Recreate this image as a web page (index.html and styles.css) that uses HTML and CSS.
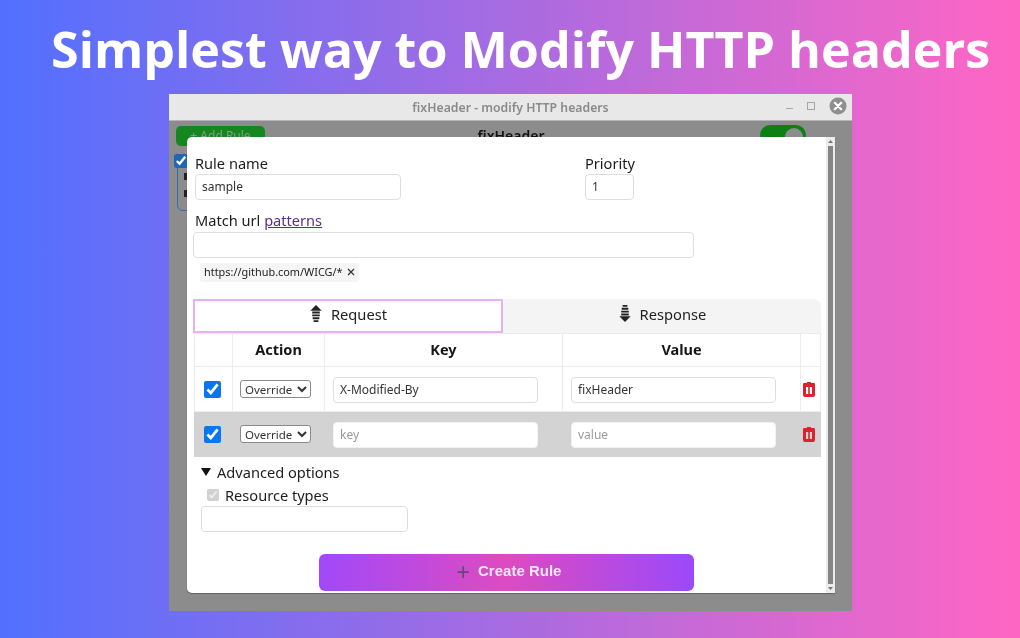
FILE: index.html
```html
<!DOCTYPE html>
<html lang="en">
<head>
<meta charset="utf-8">
<title>fixHeader</title>
<link rel="stylesheet" href="styles.css">
</head>
<body>
<h1 class="headline">Simplest way to Modify HTTP headers</h1>
<div class="window">
  <div class="titlebar">
    <span class="wintitle">fixHeader - modify HTTP headers</span>
    <div class="winctl">
      <span class="min"></span>
      <span class="max"></span>
      <svg class="close" viewBox="0 0 18 18" width="18" height="18"><circle cx="9" cy="9" r="8.5" fill="#8f8f8f"/><path d="M5.8 5.8l6.4 6.4M12.200 5.8l-6.4 6.4" stroke="#fff" stroke-width="2.2" stroke-linecap="round"/></svg>
    </div>
  </div>
  <div class="appbar">
    <span class="addrule">+ Add Rule</span>
    <span class="apptitle">fixHeader</span>
    <span class="toggle"><span class="knob"></span></span>
  </div>
  <div class="rulecard"><span class="cardmark"></span><span class="cardmark second"></span></div>
  <input class="rulecheck" type="checkbox" checked>

  <div class="modal">
    <div class="scrollbar">
      <svg class="sb-arrow" viewBox="0 0 9 9" width="9" height="9"><path d="M4.500 3L7 6H2z" fill="#777"/></svg>
      <span class="sb-thumb"></span>
      <svg class="sb-arrow" viewBox="0 0 9 9" width="9" height="9"><path d="M4.500 6L7 3H2z" fill="#777"/></svg>
    </div>
    <div class="toprow">
      <div class="namefield">
        <label class="lbl">Rule name</label>
        <input class="inp name" type="text" value="sample">
      </div>
      <div class="prifield">
        <label class="lbl">Priority</label>
        <input class="inp pri" type="text" value="1">
      </div>
    </div>
    <div class="urlfield">
      <label class="lbl">Match url <a class="link" href="#">patterns</a></label>
      <input class="inp url" type="text">
      <span class="chip">https://github.com/WICG/* <svg class="chipx" viewBox="0 0 8 8" width="8" height="8"><path d="M1 1l6 6M7 1l-6 6" stroke="#333" stroke-width="1.2"/></svg></span>
    </div>
    <div class="tabs">
      <div class="tab active">
        <svg viewBox="0 0 14 20" width="14" height="19"><path d="M7 1L13 7H1z" fill="#222"/><path d="M3 9h8M3 12h8M3.500 15h7M4.500 18h5" stroke="#222" stroke-width="2"/></svg>
        Request
      </div>
      <div class="tab">
        <svg viewBox="0 0 14 20" width="14" height="19"><path d="M4.500 2h5M3.500 5h7M3 8h8M3 11h8" stroke="#222" stroke-width="2"/><path d="M7 19L13 13H1z" fill="#222"/></svg>
        Response
      </div>
    </div>
    <table class="rules">
      <thead>
        <tr><th class="c1"></th><th class="c2">Action</th><th class="c3">Key</th><th class="c4">Value</th><th class="c5"></th></tr>
      </thead>
      <tbody>
        <tr>
          <td class="cc"><input class="chk" type="checkbox" checked></td>
          <td class="cs"><select class="sel"><option>Override</option></select></td>
          <td><input class="inp cell" type="text" value="X-Modified-By"></td>
          <td><input class="inp cell" type="text" value="fixHeader"></td>
          <td class="cc"><svg class="trash" viewBox="0 0 12 15" width="12" height="15"><path fill-rule="evenodd" d="M4 0h4v1h3a1 1 0 0 1 1 1v11a2 2 0 0 1-2 2H2a2 2 0 0 1-2-2V2a1 1 0 0 1 1-1h3zM3 5v7h2.200V5zm3.800 0v7H9V5z" fill="#e0202c"/></svg></td>
        </tr>
        <tr class="alt">
          <td class="cc"><input class="chk" type="checkbox" checked></td>
          <td class="cs"><select class="sel"><option>Override</option></select></td>
          <td><input class="inp cell" type="text" placeholder="key"></td>
          <td><input class="inp cell" type="text" placeholder="value"></td>
          <td class="cc"><svg class="trash" viewBox="0 0 12 15" width="12" height="15"><path fill-rule="evenodd" d="M4 0h4v1h3a1 1 0 0 1 1 1v11a2 2 0 0 1-2 2H2a2 2 0 0 1-2-2V2a1 1 0 0 1 1-1h3zM3 5v7h2.200V5zm3.800 0v7H9V5z" fill="#e0202c"/></svg></td>
        </tr>
      </tbody>
    </table>
    <div class="advanced"><span class="tri"></span>Advanced options</div>
    <label class="restype"><input class="graychk" type="checkbox" checked disabled>Resource types</label>
    <input class="inp res" type="text">
    <div class="btnrow">
      <button class="create" type="button"><span class="plus">+</span>Create Rule</button>
    </div>
  </div>
</div>
</body>
</html>
```

FILE: styles.css
```css
* { box-sizing: border-box; }
html, body { margin: 0; height: 100%; }
body {
  width: 1020px;
  height: 638px;
  overflow: hidden;
  position: relative;
  background: linear-gradient(90deg, #5170ff 0%, #ff66c4 100%);
  font-family: "Noto Sans", "Open Sans", sans-serif;
  color: #1a1a1a;
}
.headline {
  margin: 0;
  padding: 17px 0 0 51px;
  height: 94px;
  font-family: "Open Sans", "Noto Sans", sans-serif;
  font-size: 50.200px;
  line-height: 64px;
  font-weight: 700;
  color: #fff;
  white-space: nowrap;
}
.window {
  position: relative;
  margin-left: 169px;
  width: 683px;
  height: 517px;
  background: #8c8c8c;
  overflow: hidden;
  filter: blur(0.3px);
}
.titlebar {
  height: 27px;
  background: #e8e8e8;
  border-bottom: 1px solid #b5b5b5;
  display: flex;
  align-items: center;
  justify-content: center;
  position: relative;
}
.wintitle { font-size: 12.250px; font-weight: 600; color: #8a8a8a; }
.winctl {
  position: absolute;
  right: 5px;
  top: 3px;
  display: flex;
  align-items: center;
  gap: 14px;
  height: 18px;
}
.min { width: 7px; height: 1px; background: #a5a5a5; margin-top: 4px; }
.max { width: 8px; height: 8px; border: 1px solid #a5a5a5; }
.appbar {
  display: flex;
  align-items: flex-start;
  justify-content: space-between;
  padding: 5px 46px 0 7px;
  height: 26px;
}
.addrule {
  width: 89px;
  height: 20px;
  background: #14881e;
  border-radius: 5px;
  color: #8a9a8a;
  font-size: 12px;
  text-align: center;
  line-height: 20px;
}
.apptitle { font-size: 14px; font-weight: 600; color: #111; line-height: 20px; margin-left: -3px; }
.toggle {
  width: 46px;
  height: 20px;
  margin-top: -1px;
  background: #0d8014;
  border-radius: 10px;
  position: relative;
}
.knob { position: absolute; right: 3px; top: 3px; width: 18px; height: 18px; border-radius: 50%; background: #8c8c8c; }
.rulecard {
  position: absolute;
  left: 8px;
  top: 65px;
  width: 30px;
  height: 52px;
  border: 1px solid #2f6fb0;
  border-radius: 6px;
}
.cardmark { position: absolute; left: 6px; top: 13px; width: 4px; height: 7px; background: #222; }
.cardmark.second { top: 30px; }
.rulecheck { position: absolute; left: 5px; top: 60px; width: 14px; height: 14px; margin: 0; accent-color: #1f66b5; }
.modal {
  position: absolute;
  left: 18px;
  top: 43px;
  width: 648px;
  height: 456px;
  background: #fff;
  border-radius: 5px 0 0 5px;
  padding: 16px 0 0 6px;
  box-shadow: 0 1px 1px rgba(60,60,60,.5);
  overflow: hidden;
}
.scrollbar {
  position: absolute;
  right: 0;
  top: 0;
  bottom: 0;
  width: 9px;
  background: #ececec;
  display: flex;
  flex-direction: column;
  align-items: center;
}
.sb-arrow { flex: none; }
.sb-thumb { flex: 1; width: 5px; background: #858585; }
.toprow { display: flex; padding-left: 2px; }
.namefield { width: 390px; }
.lbl { display: block; font-size: 14.600px; line-height: 20px; color: #1d1d1d; margin-bottom: 1px; }
.link { color: #5b2d91; }
.inp {
  display: block;
  height: 26px;
  background: #fff;
  border: 1px solid #dedede;
  border-radius: 4px;
  padding: 0 6px 2px;
  font-family: inherit;
  font-size: 12px;
  color: #333;
  outline: none;
}
.inp::placeholder { color: #9a9a9a; }
.name { width: 206px; }
.pri { width: 49px; }
.urlfield { margin-top: 11px; position: relative; }
.urlfield .lbl { margin-left: 2px; margin-bottom: 3px; line-height: 18px; }
.url { width: 501px; }
.chip {
  display: inline-block;
  margin: 5px 0 0 7px;
  padding: 0 4px;
  height: 19px;
  line-height: 18px;
  background: #f5f5f5;
  border-radius: 3px;
  font-size: 10.900px;
  color: #222;
}
.chipx { margin-left: 2px; }
.tabs {
  display: flex;
  width: 628px;
  height: 34px;
  margin-top: 17px;
}
.tab {
  flex: 1;
  display: flex;
  align-items: center;
  justify-content: center;
  gap: 8px;
  padding-bottom: 5px;
  background: #f4f4f4;
  border-radius: 0 8px 0 0;
  font-size: 14.700px;
  color: #222;
}
.tab.active {
  flex: none;
  width: 310px;
  background: #fff;
  border: 2px solid #eab0f7;
  border-radius: 0;
}
.rules {
  width: 626px;
  table-layout: fixed;
  border-collapse: collapse;
  margin-left: 1px;
}
.rules th, .rules td { border: 1px solid #ececec; padding: 0 24px 0 8px; }
.rules th { height: 33px; padding: 0 0 2px; font-size: 14.500px; font-weight: 700; color: #161616; text-align: center; }
.rules td { height: 45px; }
.rules .cc { padding: 0; text-align: center; }
.rules .cs { padding: 0 0 0 7px; }
.c1 { width: 38px; }
.c2 { width: 92px; }
.c3, .c4 { width: 238px; }
.c5 { width: 20px; }
.rules tr.alt td { background: #d3d3d3; border-color: #d3d3d3; }
.cell { width: 100%; height: 26px; margin-top: 2px; }
.alt .cell { border-color: #f2f2f2; }
.chk { width: 17px; height: 17px; margin: 5px 3px 0 0; accent-color: #0a75f0; }
.sel {
  width: 71px;
  height: 18px;
  margin-bottom: 4px;
  font-family: inherit;
  font-size: 11.500px;
  color: #333;
  background: #fff;
  border: 1px solid #8a8a8a;
  border-radius: 3px;
  padding: 0;
}
.trash { display: block; margin: 1px 0 0 2px; }
.advanced {
  display: flex;
  align-items: center;
  margin: 6px 0 0 8px;
  height: 20px;
  padding-bottom: 2px;
  font-size: 14.600px;
  color: #1d1d1d;
}
.tri {
  width: 0;
  height: 0;
  border-left: 5px solid transparent;
  border-right: 5px solid transparent;
  border-top: 8px solid #111;
  margin-right: 6px;
}
.restype {
  display: flex;
  align-items: center;
  margin: 3px 0 0 14px;
  height: 20px;
  padding-bottom: 2px;
  font-size: 14.600px;
  color: #1d1d1d;
}
.graychk { width: 12px; height: 12px; margin: 0 6px 0 0; accent-color: #c8c8c8; }
.res { width: 207px; margin: 0 0 0 8px; }
.btnrow { padding-left: 126px; margin-top: 22px; }
.create {
  display: flex;
  align-items: center;
  justify-content: center;
  gap: 8px;
  width: 375px;
  height: 37px;
  padding: 0 0 5px 5px;
  border: 0;
  border-radius: 6px;
  background: linear-gradient(90deg, #a149fa 0%, #dd4bc0 50%, #9b49fb 100%);
  color: #f6e6fb;
  font-family: "Liberation Sans", Arial, sans-serif;
  font-size: 15px;
  font-weight: 700;
}
.plus { font-size: 23px; font-weight: 400; color: #5d4a78; line-height: 1; margin-top: 5px; }
```
